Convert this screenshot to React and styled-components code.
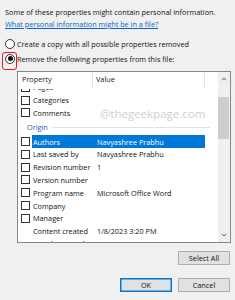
import React from "react";
import styled, { createGlobalStyle } from "styled-components";

const GlobalStyle = createGlobalStyle`
  html, body { margin: 0; padding: 0; background: #f0f0f0; }
  body {
    font-family: "Open Sans", "Noto Sans", sans-serif;
    font-size: 7.3px;
    color: #111;
  }
  * { box-sizing: border-box; }
`;

const Dialog = styled.div`
  position: relative;
  width: 235px;
  height: 300px;
  overflow: hidden;
  padding: 6px 4px 0 5px;
  display: flex;
  flex-direction: column;
`;

const Intro = styled.p`
  margin: 0;
  line-height: 12px;
  white-space: nowrap;
`;

const InfoLink = styled.a`
  display: block;
  color: #0066cc;
  text-decoration: underline;
  line-height: 12px;
  white-space: nowrap;
`;

const Options = styled.div`
  margin-top: 6px;
  display: flex;
  flex-direction: column;
  position: relative;
`;

const RadioRow = styled.label`
  display: flex;
  align-items: center;
  height: 15px;
  gap: 2px;
  white-space: nowrap;
`;

const RadioCircle = styled.span`
  width: 10px;
  height: 10px;
  border-radius: 50%;
  border: 1px solid #333;
  background: #fff;
  display: flex;
  align-items: center;
  justify-content: center;
  flex: none;
  &::after {
    content: "";
    width: 5px;
    height: 5px;
    border-radius: 50%;
    background: ${(p) => (p.$checked ? "#111" : "transparent")};
  }
`;

const Highlight = styled.span`
  position: absolute;
  left: -3.5px;
  top: 16px;
  width: 15px;
  height: 18px;
  border: 1.5px solid #e8141e;
  border-radius: 3px;
  pointer-events: none;
`;

const ListBox = styled.div`
  margin: 5px 0 0 12px;
  width: 214px;
  height: 172px;
  border: 1px solid #828790;
  background: #fff;
  display: flex;
  position: relative;
`;

const ListArea = styled.div`
  flex: 1;
  display: flex;
  flex-direction: column;
  overflow: hidden;
`;

const Header = styled.div`
  height: 17px;
  display: flex;
  align-items: stretch;
  background: #fff;
  position: relative;
  z-index: 1;
  flex: none;
`;

const HeaderCell = styled.div`
  width: ${(p) => p.$w}px;
  padding-left: ${(p) => p.$pad}px;
  padding-bottom: 3px;
  display: flex;
  align-items: center;
  color: #222;
  border-right: ${(p) => (p.$divider ? "1px solid #e5e5e5" : "none")};
  margin-bottom: 1px;
`;

const Body = styled.div`
  flex: 1;
  overflow: hidden;
`;

const Rows = styled.div`
  margin-top: -8.2px;
`;

const Row = styled.div`
  height: 12.8px;
  display: flex;
  align-items: center;
  white-space: nowrap;
`;

const CheckCell = styled.div`
  width: 14px;
  height: 100%;
  display: flex;
  align-items: center;
  padding-left: 3px;
  flex: none;
`;

const CheckBox = styled.span`
  width: 9px;
  height: 9px;
  border: 1px solid #333;
  background: #fff;
`;

const Cells = styled.div`
  width: 173px;
  height: 100%;
  display: flex;
  align-items: center;
  background: ${(p) => (p.$selected ? "#0078d7" : "transparent")};
  color: ${(p) => (p.$selected ? "#fff" : "#111")};
`;

const LabelCell = styled.span`
  width: 61px;
  padding-left: 1px;
  overflow: hidden;
`;

const ValueCell = styled.span`
  padding-left: 4px;
`;

const GroupRow = styled.div`
  height: 16px;
  display: flex;
  align-items: center;
  padding: 0 8px 0 9px;
  color: #2e55b4;
  gap: 4px;
`;

const GroupLine = styled.span`
  flex: 1;
  height: 1px;
  background: #dbe2f0;
`;

const ScrollBar = styled.div`
  width: 12px;
  background: #f0f0f0;
  display: flex;
  flex-direction: column;
  align-items: center;
  flex: none;
`;

const Arrow = styled.div`
  height: ${(p) => p.$h}px;
  width: 100%;
  display: flex;
  align-items: center;
  justify-content: center;
  flex: none;
`;

const Track = styled.div`
  flex: 1;
  width: 100%;
  padding-top: 11px;
`;

const Thumb = styled.div`
  width: 10.5px;
  height: 42px;
  background: #cdcdcd;
`;

const Watermark = styled.span`
  position: absolute;
  left: 82px;
  top: 34px;
  font-size: 11.5px;
  color: #cfcfcf;
  white-space: nowrap;
  pointer-events: none;
  z-index: 2;
`;

const ButtonRow = styled.div`
  display: flex;
  justify-content: flex-end;
  gap: 6px;
  margin-top: ${(p) => p.$mt}px;
  padding-right: 1px;
`;

const Button = styled.button`
  width: 52px;
  height: 14px;
  padding: 0;
  font: inherit;
  color: #111;
  background: #e1e1e1;
  border: 1px solid ${(p) => (p.$default ? "#0078d7" : "#adadad")};
  box-shadow: ${(p) => (p.$default ? "inset 0 0 0 0.5px #0078d7" : "none")};
  display: flex;
  align-items: center;
  justify-content: center;
`;

const Chevron = ({ up }) => (
  <svg width="6" height="4" viewBox="0 0 6 4">
    <path
      d={up ? "M0.8 3.3 L3 1 L5.2 3.3" : "M0.8 0.8 L3 3 L5.2 0.8"}
      fill="none"
      stroke="#606060"
      strokeWidth="1"
    />
  </svg>
);

const rows = [
  { label: "Pages", check: true },
  { label: "Categories", check: true },
  { label: "Comments", check: true },
  { group: "Origin" },
  { label: "Authors", value: "Navyashree Prabhu", check: true, selected: true },
  { label: "Last saved by", value: "Navyashree Prabhu", check: true },
  { label: "Revision number", value: "1", check: true },
  { label: "Version number", check: true },
  { label: "Program name", value: "Microsoft Office Word", check: true },
  { label: "Company", check: true },
  { label: "Manager", check: true },
  { label: "Content created", value: "1/8/2023 3:20 PM" },
  { label: "Date last saved", value: "1/8/2023 3:40 PM" },
];

export default function App() {
  return (
    <>
      <GlobalStyle />
      <Dialog>
        <Intro>Some of these properties might contain personal information.</Intro>
        <InfoLink href="#">What personal information might be in a file?</InfoLink>
        <Options>
          <RadioRow>
            <RadioCircle />
            Create a copy with all possible properties removed
          </RadioRow>
          <RadioRow>
            <RadioCircle $checked />
            Remove the following properties from this file:
          </RadioRow>
          <Highlight />
        </Options>
        <ListBox>
          <ListArea>
            <Header>
              <HeaderCell $w={75} $pad={4} $divider>Property</HeaderCell>
              <HeaderCell $w={112} $pad={3} $divider>Value</HeaderCell>
            </Header>
            <Body>
              <Rows>
                {rows.map((r, i) =>
                  r.group ? (
                    <GroupRow key={i}>
                      {r.group}
                      <GroupLine />
                    </GroupRow>
                  ) : (
                    <Row key={i}>
                      <CheckCell>{r.check && <CheckBox />}</CheckCell>
                      <Cells $selected={r.selected}>
                        <LabelCell>{r.label}</LabelCell>
                        {r.value && <ValueCell>{r.value}</ValueCell>}
                      </Cells>
                    </Row>
                  )
                )}
              </Rows>
            </Body>
          </ListArea>
          <ScrollBar>
            <Arrow $h={14}><Chevron up /></Arrow>
            <Track><Thumb /></Track>
            <Arrow $h={14}><Chevron /></Arrow>
          </ScrollBar>
          <Watermark>@thegeekpage.com</Watermark>
        </ListBox>
        <ButtonRow $mt={8}>
          <Button>Select All</Button>
        </ButtonRow>
        <ButtonRow $mt={13}>
          <Button $default>OK</Button>
          <Button>Cancel</Button>
        </ButtonRow>
      </Dialog>
    </>
  );
}
